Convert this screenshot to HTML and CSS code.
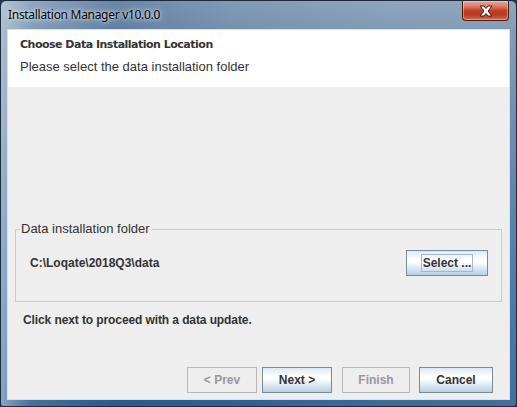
FILE: index.html
```html
<!DOCTYPE html>
<html>
<head>
<meta charset="utf-8">
<link rel="stylesheet" href="styles.css">
</head>
<body>
<div class="window">
  <div class="titlebar">
    <span class="title">Installation Manager v10.0.0</span>
    <div class="close">
      <svg width="16" height="12" viewBox="0 0 16 12">
        <path d="M2 1 L6 1 L8 3.5 L10 1 L14 1 L10 6 L14 11 L10 11 L8 8.5 L6 11 L2 11 L6 6 Z" fill="#ffffff" stroke="#3a1a14" stroke-width="1" stroke-linejoin="round"/>
      </svg>
    </div>
  </div>
  <div class="client">
    <div class="header">
      <div class="h-title">Choose Data Installation Location</div>
      <div class="h-sub">Please select the data installation folder</div>
    </div>
    <div class="body">
      <fieldset class="group">
        <legend>Data installation folder</legend>
        <div class="row">
          <span class="path">C:\Loqate\2018Q3\data</span>
          <button class="btn select"><span class="focus">Select ...</span></button>
        </div>
      </fieldset>
      <p class="hint">Click next to proceed with a data update.</p>
      <div class="actions">
        <button class="btn disabled prev">&lt; Prev</button>
        <button class="btn next">Next &gt;</button>
        <button class="btn disabled finish">Finish</button>
        <button class="btn cancel">Cancel</button>
      </div>
    </div>
  </div>
</div>
</body>
</html>
```
FILE: styles.css
```css
html, body {
  margin: 0;
  padding: 0;
}
body {
  width: 517px;
  height: 407px;
  overflow: hidden;
  background: #1f3550;
  font-family: "Liberation Sans", Arial, sans-serif;
}
.window {
  box-sizing: border-box;
  width: 517px;
  height: 407px;
  border: 1px solid #1b2a3d;
  border-radius: 6px 6px 3px 3px;
  padding: 0 7px 7px 7px;
  display: flex;
  flex-direction: column;
  background:
    linear-gradient(to right, rgba(210,222,234,0.55) 0, rgba(150,175,200,0.2) 6%, rgba(40,80,130,0.35) 22%, rgba(60,95,140,0.15) 45%, rgba(140,165,190,0.15) 75%, rgba(150,170,190,0.2) 100%),
    linear-gradient(to bottom, #8ea5bc 0, #7e98b3 8%, #6a8bad 25%, #4b78a6 55%, #386a9e 80%, #2e5f94 100%);
}
.titlebar {
  height: 29px;
  flex: none;
  display: flex;
  justify-content: space-between;
  align-items: flex-start;
}
.title {
  margin-top: 6px;
  font-family: "Noto Sans", "Open Sans", sans-serif;
  font-size: 12px;
  letter-spacing: -0.3px;
  line-height: 16px;
  color: #000;
  text-shadow: 0 0 6px rgba(255,255,255,0.9), 0 0 3px rgba(255,255,255,0.7);
}
.close {
  box-sizing: border-box;
  width: 47px;
  height: 20px;
  margin-top: 0;
  border: 1px solid #4a1c14;
  border-top: none;
  border-radius: 0 0 4px 4px;
  background: linear-gradient(to bottom, #e7a898 0, #d77a62 30%, #c23f22 50%, #b8391e 70%, #d26a4c 100%);
  box-shadow: inset 0 0 0 1px rgba(255,220,210,0.45);
  display: flex;
  align-items: center;
  justify-content: center;
}
.close svg {
  display: block;
}
.client {
  flex: 1;
  display: flex;
  flex-direction: column;
  background: #eeeeee;
  box-shadow: 0 0 0 1px #d6e1ec;
}
.header {
  box-sizing: border-box;
  height: 57px;
  flex: none;
  background: #ffffff;
  padding: 7px 12px 0 12px;
  color: #333333;
}
.h-title {
  font-family: "DejaVu Sans", Tahoma, sans-serif;
  font-weight: bold;
  font-size: 11px;
  line-height: 16px;
  letter-spacing: -0.5px;
}
.h-sub {
  margin-top: 6px;
  font-size: 13px;
  line-height: 16px;
}
.body {
  flex: 1;
  display: flex;
  flex-direction: column;
  padding-top: 135px;
  color: #333333;
}
.group {
  box-sizing: border-box;
  height: 80px;
  margin: 0 7px;
  padding: 0 13px 0 4px;
  border: 1px solid #b8cfe5;
  min-inline-size: 0;
}
.group legend {
  padding: 0 1px;
  font-size: 13px;
  line-height: 14px;
  color: #333333;
}
.row {
  margin-top: 14px;
  display: flex;
  align-items: center;
  justify-content: space-between;
}
.path {
  margin-left: 10px;
  font-weight: bold;
  font-size: 12px;
  line-height: 16px;
}
.btn {
  box-sizing: border-box;
  height: 26px;
  margin: 0;
  padding: 0;
  border: 1px solid #7a8a99;
  background: linear-gradient(to bottom, #dde8f3 0, #ffffff 35%, #ffffff 45%, #b8cfe5 100%);
  font-family: "Liberation Sans", Arial, sans-serif;
  font-weight: bold;
  font-size: 12px;
  color: #333333;
  display: flex;
  align-items: center;
  justify-content: center;
  white-space: nowrap;
}
.select {
  width: 82px;
}
.focus {
  box-sizing: border-box;
  height: 18px;
  padding: 0 1px;
  border: 1px solid #a3b8cc;
  display: flex;
  align-items: center;
  justify-content: center;
  line-height: 14px;
  white-space: nowrap;
}
.hint {
  margin: 10px 0 0 15px;
  font-weight: bold;
  font-size: 12px;
  letter-spacing: -0.1px;
  line-height: 16px;
}
.actions {
  margin-top: 39px;
  display: flex;
  justify-content: flex-end;
  padding-right: 16px;
}
.btn.disabled {
  border-color: #b8b8b8;
  background: #eeeeee;
  color: #999999;
}
.prev { width: 70px; }
.next { width: 70px; margin-left: 5px; }
.finish { width: 68px; margin-left: 10px; }
.cancel { width: 74px; margin-left: 9px; }
```
